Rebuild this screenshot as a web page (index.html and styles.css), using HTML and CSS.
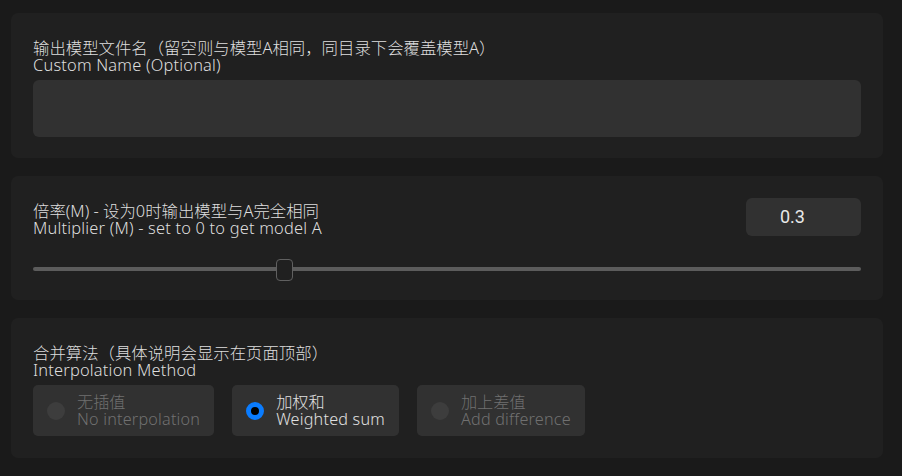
FILE: index.html
```html
<!DOCTYPE html>
<html lang="zh">
<head>
<meta charset="utf-8">
<link rel="stylesheet" href="styles.css">
</head>
<body>
<div class="page">
  <section class="panel panel-name">
    <label class="label">
      <span class="line">输出模型文件名（留空则与模型A相同，同目录下会覆盖模型A）</span>
      <span class="line en">Custom Name (Optional)</span>
    </label>
    <div class="text-input"></div>
  </section>

  <section class="panel panel-mult">
    <div class="mult-head">
      <label class="label">
        <span class="line">倍率(M) - 设为0时输出模型与A完全相同</span>
        <span class="line en">Multiplier (M) - set to 0 to get model A</span>
      </label>
      <div class="num-box">0.3</div>
    </div>
    <div class="slider">
      <div class="track"></div>
      <div class="thumb"></div>
    </div>
  </section>

  <section class="panel panel-method">
    <label class="label">
      <span class="line">合并算法（具体说明会显示在页面顶部）</span>
      <span class="line en">Interpolation Method</span>
    </label>
    <div class="radios">
      <div class="radio disabled">
        <span class="dot"></span>
        <span class="rtext"><span class="line">无插值</span><span class="line en">No interpolation</span></span>
      </div>
      <div class="radio checked">
        <span class="dot"></span>
        <span class="rtext"><span class="line">加权和</span><span class="line en">Weighted sum</span></span>
      </div>
      <div class="radio disabled">
        <span class="dot"></span>
        <span class="rtext"><span class="line">加上差值</span><span class="line en">Add difference</span></span>
      </div>
    </div>
  </section>
</div>
</body>
</html>
```
FILE: styles.css
```css
html, body {
  margin: 0;
  padding: 0;
  background: #1a1a1a;
}
body {
  font-family: "Noto Sans", "Noto Sans CJK SC", sans-serif;
  font-weight: 300;
  color: #e0e0e0;
  width: 902px;
  height: 476px;
  overflow: hidden;
}
.page {
  display: flex;
  flex-direction: column;
  gap: 18px;
  padding: 13px 19px 0 11px;
}
.panel {
  background: #202020;
  border-radius: 7px;
  padding: 26px 22px 21px 22px;
  display: flex;
  flex-direction: column;
}
.label {
  display: flex;
  flex-direction: column;
  font-size: 16.4px;
  line-height: 17px;
  color: #dedede;
}
.line { display: block; white-space: nowrap; }
.line.en { letter-spacing: 0.2px; }

.panel-name { height: 145px; box-sizing: border-box; }
.text-input {
  margin-top: 7px;
  height: 57px;
  background: #313131;
  border-radius: 6px;
}

.panel-mult { height: 124px; box-sizing: border-box; padding-top: 22px; }
.mult-head {
  display: flex;
  justify-content: space-between;
  align-items: flex-end;
}
.num-box {
  width: 115px;
  height: 38px;
  box-sizing: border-box;
  padding-right: 22px;
  background: #313131;
  border-radius: 6px;
  font-size: 18px;
  line-height: 38px;
  text-align: center;
  color: #e8e8e8;
  font-family: "Roboto", "Noto Sans", sans-serif;
  font-weight: 400;
}
.slider {
  position: relative;
  margin-top: 23px;
  height: 22px;
  display: flex;
  align-items: center;
}
.track {
  width: 100%;
  height: 4px;
  border-radius: 2px;
  background: #5c5c5c;
}
.thumb {
  position: absolute;
  left: 243px;
  top: 0;
  width: 15px;
  height: 20px;
  border: 1px solid #606060;
  border-radius: 4px;
  background: #202020;
}

.panel-method { height: 140px; box-sizing: border-box; }
.radios {
  display: flex;
  gap: 18px;
  margin-top: 7px;
}
.radio {
  display: flex;
  align-items: center;
  height: 51px;
  box-sizing: border-box;
  padding: 0 14px 0 14px;
  background: #313131;
  border-radius: 5px;
  gap: 12px;
}
.radio .dot {
  width: 18px;
  height: 18px;
  border-radius: 50%;
  box-sizing: border-box;
  background: #3d3d3d;
  flex: none;
}
.radio.checked .dot {
  background: #000;
  border: 5px solid #0a7cff;
}
.rtext {
  display: flex;
  flex-direction: column;
  font-size: 16.2px;
  line-height: 17px;
  padding-top: 1px;
}
.radio.disabled .rtext { color: #707070; }
.radio.checked .rtext { color: #e0e0e0; }
```
